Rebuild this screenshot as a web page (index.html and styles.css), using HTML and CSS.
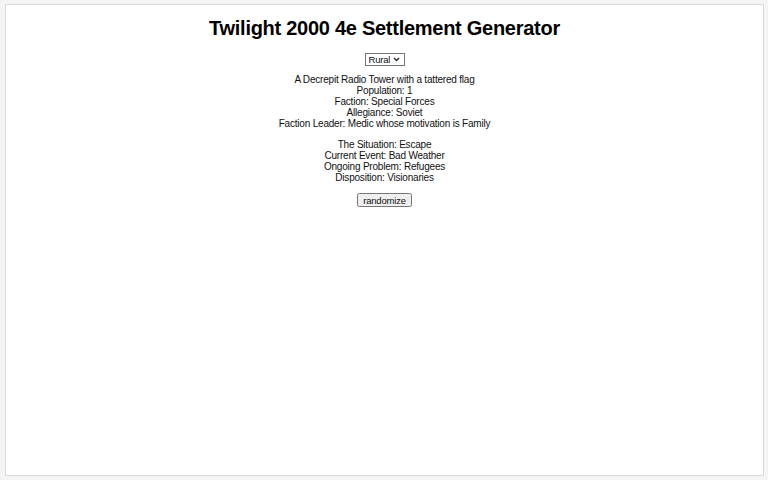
FILE: index.html
```html
<!DOCTYPE html>
<html lang="en">
<head>
  <meta charset="UTF-8">
  <meta name="viewport" content="width=device-width, initial-scale=1.0">
  <title>Twilight 2000 4e Settlement Generator</title>
  <link rel="stylesheet" href="styles.css">
</head>
<body>
  <div class="container">
    <h1>Twilight 2000 4e Settlement Generator</h1>
    <select id="type">
      <option value="rural">Rural</option>
      <option value="urban">Urban</option>
    </select>
    <div class="settlement">
      <div>A Decrepit Radio Tower with a tattered flag</div>
      <div>Population: 1</div>
      <div>Faction: Special Forces</div>
      <div>Allegiance: Soviet</div>
      <div>Faction Leader: Medic whose motivation is Family</div>
    </div>
    <div class="settlement">
      <div>The Situation: Escape</div>
      <div>Current Event: Bad Weather</div>
      <div>Ongoing Problem: Refugees</div>
      <div>Disposition: Visionaries</div>
    </div>
    <button id="randomize">randomize</button>
  </div>
</body>
</html>
```

FILE: styles.css
```css
body {
  background-color: #f4f4f4;
  font-family: "Liberation Sans", Arial, sans-serif;
  margin: 0;
  padding: 4px 4px 4px 5px;
  height: 100vh;
  box-sizing: border-box;
}
.container {
  background-color: #fff;
  border: 1px solid #dcdcdc;
  height: 100%;
  box-sizing: border-box;
  display: flex;
  flex-direction: column;
  align-items: center;
  text-align: center;
  color: #111;
}
h1 {
  font-size: 20px;
  letter-spacing: -0.27px;
  margin: 12px 0 13px;
  color: #000;
}
select, button {
  font-family: "Liberation Sans", Arial, sans-serif;
  font-size: 9.5px;
  letter-spacing: -0.2px;
  color: #111;
}
/* native arrow is too big at this size, draw a small chevron instead */
select {
  -webkit-appearance: none;
  appearance: none;
  border: 1px solid #767676;
  border-radius: 0;
  background: #fff url("data:image/svg+xml,%3Csvg xmlns='http://www.w3.org/2000/svg' width='7' height='5' viewBox='0 0 7 5'%3E%3Cpath d='M1 1l2.5 2.5L6 1' fill='none' stroke='%23222' stroke-width='1.3'/%3E%3C/svg%3E") no-repeat right 4px center;
  padding: 0 14px 0 3px;
  height: 13px;
  line-height: 11px;
  width: 40px;
}
.settlement {
  font-size: 10px;
  letter-spacing: -0.2px;
  line-height: 11px;
  margin-top: 8px;
}
.settlement + .settlement {
  margin-top: 10px;
}
button {
  margin-top: 10px;
  padding: 0 4px;
  height: 14px;
}
```
